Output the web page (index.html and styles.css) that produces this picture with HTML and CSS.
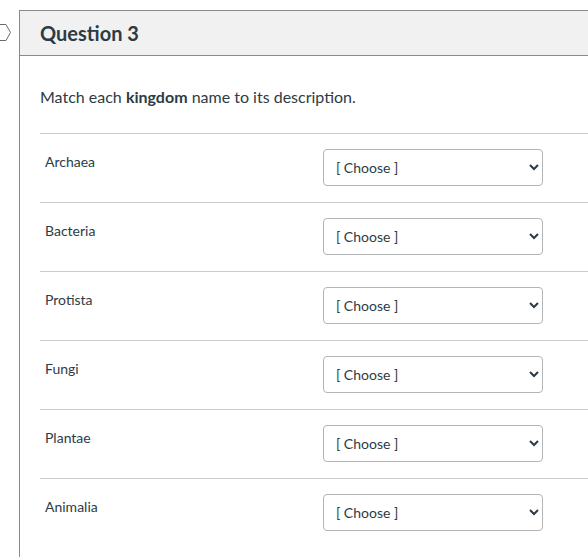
FILE: index.html
```html
<!DOCTYPE html>
<html lang="en">
<head>
    <meta charset="UTF-8">
    <title>Question 3</title>
    <link rel="stylesheet" href="styles.css">
</head>
<body>
    <div class="page">
        <div class="marker">
            <svg width="12" height="17" viewBox="0 0 12 17">
                <polygon points="-2,0.5 6,0.5 10.5,8.5 6,16.5 -2,16.5" fill="#fff" stroke="#6b6b6b" stroke-width="1"/>
            </svg>
        </div>
        <div class="question">
            <div class="question-header">Question 3</div>
            <div class="question-body">
                <p class="question-text">Match each <strong>kingdom</strong> name to its description.</p>
                <div class="answer">
                    <div class="answer-label">Archaea</div>
                    <select class="answer-select"><option>[ Choose ]</option></select>
                </div>
                <div class="answer">
                    <div class="answer-label">Bacteria</div>
                    <select class="answer-select"><option>[ Choose ]</option></select>
                </div>
                <div class="answer">
                    <div class="answer-label">Protista</div>
                    <select class="answer-select"><option>[ Choose ]</option></select>
                </div>
                <div class="answer">
                    <div class="answer-label">Fungi</div>
                    <select class="answer-select"><option>[ Choose ]</option></select>
                </div>
                <div class="answer">
                    <div class="answer-label">Plantae</div>
                    <select class="answer-select"><option>[ Choose ]</option></select>
                </div>
                <div class="answer">
                    <div class="answer-label">Animalia</div>
                    <select class="answer-select"><option>[ Choose ]</option></select>
                </div>
            </div>
        </div>
    </div>
</body>
</html>
```

FILE: styles.css
```css
body {
    margin: 0;
    font-family: 'Lato', 'Liberation Sans', sans-serif;
    color: #2d3b45;
    background-color: #fff;
    overflow: hidden;
}
.page {
    display: flex;
    height: 557px;
    padding-top: 10px;
    box-sizing: border-box;
}
.marker {
    width: 19px;
    flex-shrink: 0;
    padding-top: 14px;
}
.marker svg {
    display: block;
}
.question {
    flex: 1;
    border: 1px solid #8a8a8a;
    border-right: none;
    border-bottom: none;
}
.question-header {
    height: 44px;
    line-height: 44px;
    padding-left: 20px;
    background-color: #f1f1f1;
    border-bottom: 1px solid #8a8a8a;
    font-size: 20px;
    font-weight: bold;
}
.question-body {
    padding: 29px 0 0 20px;
}
.question-text {
    margin: 0 0 24px;
    font-size: 16px;
    line-height: 24px;
}
.answer {
    display: flex;
    height: 68px;
    border-top: 1px solid #c7cdd1;
}
.answer-label {
    width: 278px;
    padding: 18px 0 0 5px;
    font-size: 14px;
    line-height: 20px;
}
.answer-select {
    margin-top: 15px;
    width: 220px;
    height: 37px;
    padding: 0 8px;
    font-family: 'Lato', 'Liberation Sans', sans-serif;
    font-size: 14px;
    color: #2d3b45;
    background-color: #fff;
    border: 1px solid #b4b4b4;
    border-radius: 4px;
}
```
